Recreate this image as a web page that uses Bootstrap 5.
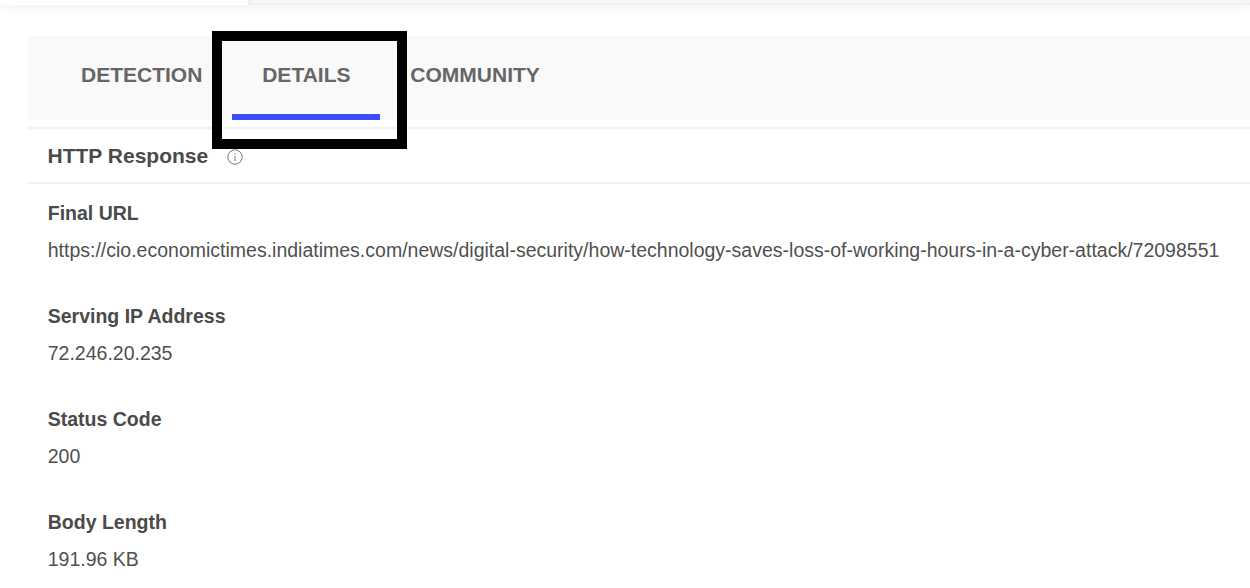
<!DOCTYPE html>
<html lang="en">
<head>
<meta charset="utf-8">
<title>Details</title>
<link href="https://cdn.jsdelivr.net/npm/bootstrap@5.3.0/dist/css/bootstrap.min.css" rel="stylesheet">
<style>
html,body{height:100%;}
body{font-family:"Liberation Sans",Arial,sans-serif;color:#444;background:#fff;overflow:hidden;}
.topstrip{height:5px;background:#fff;box-shadow:0 2px 8px rgba(0,0,0,.08);}
.topfill{width:248px;}
.topbar{background:#f6f6f6;border-bottom:2px solid #f0f0f0;border-left:2px solid #f0f0f0;}
.pagewrap{padding:31px 0 0 28px;}
.tabbar{height:84px;background:#f9f9f9;padding-left:33px;margin-bottom:7px;}
.tabitem{position:relative;display:block;padding:26px 20px 0;font-size:21px;line-height:26px;font-weight:700;color:#666;text-decoration:none;}
.tabitem.is-on::after{content:"";position:absolute;left:0;right:0;bottom:0;height:6px;background:#3e4cff;}
.tabitem.is-on{width:148px;margin:0 10px;padding:26px 0 0;text-align:center;}
.focusbox{position:absolute;left:212px;top:31px;width:195px;height:118px;border:10px solid #000;pointer-events:none;}
.headrow{height:57px;border-top:2px solid #f0f0f0;border-bottom:2px solid #f0f0f0;padding-left:19.5px;}
.headtitle{font-size:21px;line-height:26px;font-weight:700;color:#4a4a4a;padding-top:1px;}
.infoicon{margin-left:19px;width:16px;height:16px;margin-top:2px;}
.fieldlist{padding:16px 0 0 19.75px;}
.fieldblock{height:103px;}
.fieldname{font-size:19.5px;font-weight:700;line-height:26px;color:#4a4a4a;margin:0;}
.fieldval{font-size:19.5px;line-height:26px;color:#505050;margin:11px 0 0;white-space:nowrap;}
</style>
</head>
<body>
<div class="d-flex topstrip">
  <div class="topfill"></div>
  <div class="topbar flex-grow-1"></div>
</div>
<div class="pagewrap">
  <nav class="tabbar d-flex">
    <a class="tabitem" href="#">DETECTION</a>
    <a class="tabitem is-on" href="#">DETAILS</a>
    <a class="tabitem" href="#">COMMUNITY</a>
  </nav>
  <div class="headrow d-flex align-items-center">
    <span class="headtitle">HTTP Response</span>
    <svg class="infoicon" viewBox="0 0 16 16" fill="none" stroke="#777" stroke-width="1"><circle cx="8" cy="8" r="7.2"/><path d="M8 7v5M8 4.2v1.3"/></svg>
  </div>
  <div class="fieldlist">
    <div class="fieldblock"><p class="fieldname">Final URL</p><p class="fieldval">https://cio.economictimes.indiatimes.com/news/digital-security/how-technology-saves-loss-of-working-hours-in-a-cyber-attack/72098551</p></div>
    <div class="fieldblock"><p class="fieldname">Serving IP Address</p><p class="fieldval">72.246.20.235</p></div>
    <div class="fieldblock"><p class="fieldname">Status Code</p><p class="fieldval">200</p></div>
    <div class="fieldblock"><p class="fieldname">Body Length</p><p class="fieldval">191.96 KB</p></div>
  </div>
</div>
<div class="focusbox"></div>
<script src="https://cdn.jsdelivr.net/npm/bootstrap@5.3.0/dist/js/bootstrap.bundle.min.js"></script>
</body>
</html>
